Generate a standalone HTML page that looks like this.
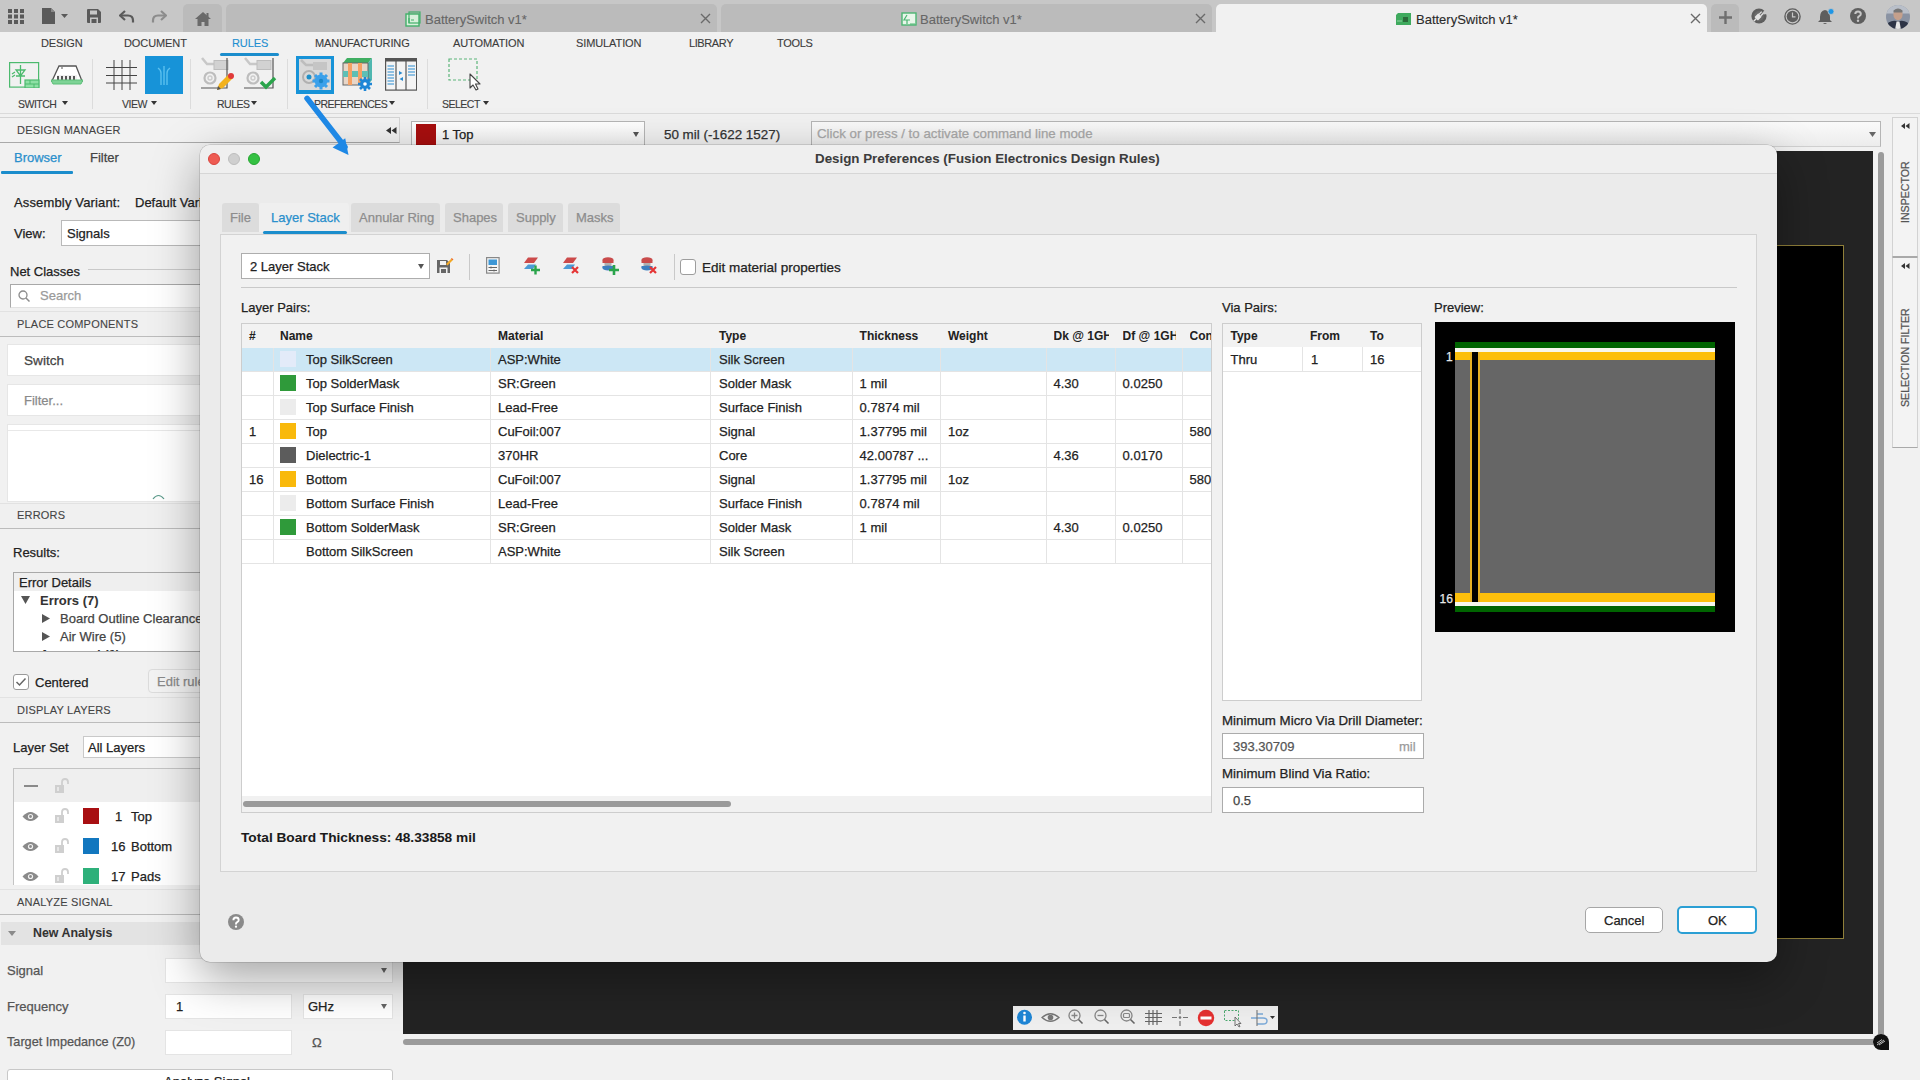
<!DOCTYPE html>
<html><head><meta charset="utf-8">
<style>
*{box-sizing:border-box;margin:0;padding:0}
html,body{width:1920px;height:1080px;overflow:hidden}
body{position:relative;background:#f1f1f1;font-family:"Liberation Sans",sans-serif;color:#222;font-size:13px}
.a{position:absolute}
.t{position:absolute;white-space:nowrap;line-height:1;-webkit-text-stroke:0.25px currentColor}
.t[style*="bold"]{-webkit-text-stroke:0.05px currentColor}
/* title bar */
#tb{left:0;top:0;width:1920px;height:32px;background:#c7c7c7}
.tab{top:4px;height:28px;background:#bbbbbb;border-radius:5px 5px 0 0}
.tabtxt{font-size:13px;color:#666;-webkit-text-stroke:0.1px currentColor}
/* ribbon */
#rb{left:0;top:32px;width:1920px;height:82px;background:#f1f1f1;border-bottom:1px solid #dadada}
.menu{top:6px;font-size:11px;color:#3c3c3c;letter-spacing:-0.1px;-webkit-text-stroke:0.12px currentColor}
.rlab{top:67px;font-size:10.5px;color:#3c3c3c;letter-spacing:-0.5px;-webkit-text-stroke:0.12px currentColor}
.sep{width:1px;background:#dcdcdc}
/* left panel */
.hdr{left:0;width:200px;height:26px;background:#f0f0f0;border-top:1px solid #e2e2e2;border-bottom:1px solid #bcbcbc}
.hdrt{font-size:11px;color:#444;letter-spacing:0.2px;-webkit-text-stroke:0.1px currentColor}
.lbl{font-size:13px;color:#222}
.box{background:#fff;border:1px solid #dcdcdc}
</style></head><body>

<!-- TITLE BAR -->
<div id="tb" class="a">
 <svg class="a" style="left:8px;top:9px" width="16" height="15" viewBox="0 0 16 15"><g fill="#5a5a5a"><rect x="0" y="0" width="4" height="4"/><rect x="6" y="0" width="4" height="4"/><rect x="12" y="0" width="4" height="4"/><rect x="0" y="5.5" width="4" height="4"/><rect x="6" y="5.5" width="4" height="4"/><rect x="12" y="5.5" width="4" height="4"/><rect x="0" y="11" width="4" height="4"/><rect x="6" y="11" width="4" height="4"/><rect x="12" y="11" width="4" height="4"/></g></svg>
 <svg class="a" style="left:42px;top:8px" width="28" height="16" viewBox="0 0 28 16"><path d="M0 0H9L13 4V16H0Z" fill="#5a5a5a"/><path d="M9 0V4H13" fill="#888"/><path d="M19 6H26L22.5 10Z" fill="#5a5a5a"/></svg>
 <svg class="a" style="left:87px;top:9px" width="14" height="14" viewBox="0 0 14 14"><path d="M1 0H11L14 3V13Q14 14 13 14H1Q0 14 0 13V1Q0 0 1 0Z" fill="#5a5a5a"/><rect x="3" y="1.5" width="7" height="4" fill="#c7c7c7"/><rect x="3" y="8.5" width="8" height="5.5" fill="#c7c7c7"/><rect x="4.5" y="10" width="5" height="4" fill="#5a5a5a"/></svg>
 <svg class="a" style="left:119px;top:10px" width="16" height="13" viewBox="0 0 16 13"><path d="M6 1L1 5.5L6 10" fill="none" stroke="#5a5a5a" stroke-width="2.2" stroke-linejoin="round"/><path d="M2 5.5H9Q14 5.5 14 10.5V12.5" fill="none" stroke="#5a5a5a" stroke-width="2.2"/></svg>
 <svg class="a" style="left:151px;top:10px" width="16" height="13" viewBox="0 0 16 13"><path d="M10 1L15 5.5L10 10" fill="none" stroke="#8c8c8c" stroke-width="2.2" stroke-linejoin="round"/><path d="M14 5.5H7Q2 5.5 2 10.5V12.5" fill="none" stroke="#8c8c8c" stroke-width="2.2"/></svg>
 <div class="a tab" style="left:183px;width:39px"></div>
 <svg class="a" style="left:195px;top:12px" width="16" height="14" viewBox="0 0 16 14"><path d="M8 0L16 7H13.5V14H9.5V10H6.5V14H2.5V7H0Z" fill="#6a6a6a"/><rect x="11.5" y="1" width="2" height="4" fill="#6a6a6a"/></svg>
 <div class="a tab" style="left:226px;width:491px"></div>
 <div class="a tab" style="left:721px;width:491px"></div>
 <div class="a tab" style="left:1216px;width:491px;background:#f1f1f1"></div>
 <div class="a tab" style="left:1711px;width:28px"></div>
 <!-- tab icons -->
 <svg class="a" style="left:405px;top:11px" width="16" height="16" viewBox="0 0 16 16"><rect x="1" y="3" width="13" height="12" fill="#d9f0dc" stroke="#42b06a" stroke-width="1.4"/><rect x="4" y="1" width="11" height="11" fill="none" stroke="#42b06a" stroke-width="1.2"/><path d="M4 7V12M6 9H9" stroke="#42b06a" stroke-width="1.2"/></svg>
 <div class="t tabtxt" style="left:425px;top:13px">BatterySwitch v1*</div>
 <svg class="a" style="left:700px;top:13px" width="11" height="11" viewBox="0 0 11 11"><path d="M1 1L10 10M10 1L1 10" stroke="#6a6a6a" stroke-width="1.4"/></svg>
 <svg class="a" style="left:901px;top:12px" width="16" height="15" viewBox="0 0 16 15"><rect x="1" y="1" width="14" height="12" fill="#e8f6ea" stroke="#4cb572" stroke-width="1.4"/><path d="M6 3L3 8H9M6 8V12M9 12H14" stroke="#4cb572" stroke-width="1.2" fill="none"/></svg>
 <div class="t tabtxt" style="left:920px;top:13px">BatterySwitch v1*</div>
 <svg class="a" style="left:1195px;top:13px" width="11" height="11" viewBox="0 0 11 11"><path d="M1 1L10 10M10 1L1 10" stroke="#6a6a6a" stroke-width="1.4"/></svg>
 <svg class="a" style="left:1396px;top:13px" width="15" height="12" viewBox="0 0 15 12"><path d="M2 0H15V12H0V2Z" fill="#3faa5e"/><rect x="7" y="4" width="5" height="5" fill="#2a6a3a"/><path d="M1 8H6" stroke="#8fd1a0" stroke-width="1"/></svg>
 <div class="t tabtxt" style="left:1416px;top:13px;color:#2a2a2a">BatterySwitch v1*</div>
 <svg class="a" style="left:1690px;top:13px" width="11" height="11" viewBox="0 0 11 11"><path d="M1 1L10 10M10 1L1 10" stroke="#6a6a6a" stroke-width="1.4"/></svg>
 <svg class="a" style="left:1719px;top:11px" width="13" height="13" viewBox="0 0 13 13"><path d="M6.5 0V13M0 6.5H13" stroke="#707070" stroke-width="2.4"/></svg>
 <svg class="a" style="left:1751px;top:8px" width="16" height="16" viewBox="0 0 16 16"><circle cx="8" cy="8" r="7.6" fill="#5e5e5e"/><path d="M9 7L16 0L16 6Z" fill="#c7c7c7"/><circle cx="8" cy="8" r="5" fill="#6a6a6a"/><g transform="rotate(45 8 8)"><rect x="5.6" y="6.5" width="4.8" height="5.5" rx="0.8" fill="#e2e2e2"/><rect x="6.2" y="3" width="1.3" height="3.5" fill="#e2e2e2"/><rect x="8.5" y="3" width="1.3" height="3.5" fill="#e2e2e2"/><rect x="7.3" y="12" width="1.4" height="3.5" fill="#e2e2e2"/></g></svg>
 <svg class="a" style="left:1784px;top:8px" width="17" height="17" viewBox="0 0 17 17"><circle cx="8.5" cy="8.5" r="7.6" fill="none" stroke="#5e5e5e" stroke-width="1.4"/><circle cx="8.5" cy="8.5" r="5.8" fill="#5e5e5e"/><path d="M8.5 4.5V8.8H11.5" fill="none" stroke="#c7c7c7" stroke-width="1.2"/></svg>
 <svg class="a" style="left:1817px;top:8px" width="18" height="17" viewBox="0 0 18 17"><path d="M8 2Q3 3 3 9V12L1 14H15L13 12V9Q13 3 8 2Z" fill="#5e5e5e"/><path d="M6 15Q8 17 10 15Z" fill="#5e5e5e"/><circle cx="14" cy="3.5" r="3" fill="#1e96e6" stroke="#c7c7c7" stroke-width="0.8"/></svg>
 <svg class="a" style="left:1850px;top:8px" width="16" height="16" viewBox="0 0 16 16"><circle cx="8" cy="8" r="8" fill="#5e5e5e"/><path d="M5.3 6Q5.3 3.4 8 3.4Q10.8 3.4 10.8 6Q10.8 7.5 9.2 8.2Q8 8.8 8 10V10.5" fill="none" stroke="#c7c7c7" stroke-width="2"/><circle cx="8" cy="12.8" r="1.2" fill="#c7c7c7"/></svg>
 <div class="a" style="left:1885.5px;top:4.5px;width:24px;height:24px;border-radius:12px;overflow:hidden"><svg width="24" height="24" viewBox="0.5 0.5 24 24" style="display:block"><rect width="25" height="25" fill="#8a93a3"/><rect y="0" width="25" height="9" fill="#b9bfc9"/><ellipse cx="12.5" cy="10" rx="4.6" ry="5.8" fill="#c4a08c"/><path d="M8 6Q12.5 2 17 6V8H8Z" fill="#777"/><path d="M0 25L3 18Q8 15 12.5 17Q17 15 22 18L25 25Z" fill="#2d3446"/><path d="M9.5 25L11 17H14L15.5 25Z" fill="#e6e6e6"/></svg></div>
</div>

<!-- RIBBON -->
<div id="rb" class="a">
 <div class="t menu" style="left:41px">DESIGN</div>
 <div class="t menu" style="left:124px">DOCUMENT</div>
 <div class="t menu" style="left:232px;color:#1f8fd0">RULES</div>
 <div class="a" style="left:220px;top:21px;width:59px;height:3px;background:#1b8dcc;border-radius:1.5px"></div>
 <div class="t menu" style="left:315px">MANUFACTURING</div>
 <div class="t menu" style="left:453px">AUTOMATION</div>
 <div class="t menu" style="left:576px">SIMULATION</div>
 <div class="t menu" style="left:689px;letter-spacing:-0.4px">LIBRARY</div>
 <div class="t menu" style="left:777px;letter-spacing:-0.3px">TOOLS</div>
 <!-- switch icons -->
 <svg class="a" style="left:9px;top:30px" width="31" height="26" viewBox="0 0 31 26"><rect x="0.6" y="0.6" width="29" height="24.5" fill="none" stroke="#4cba6e" stroke-width="1.2"/><path d="M11.5 3V22M7 8H16L11.5 14ZM7 14H16M3 12L6 10M3 15L6 13" fill="none" stroke="#4cba6e" stroke-width="1.3"/><rect x="16" y="18" width="14" height="8" fill="#8ee0a5" stroke="#4cba6e" stroke-width="1.2"/><path d="M16 22H30M21 18V22M25 22V26" stroke="#4cba6e" stroke-width="1"/></svg>
 <svg class="a" style="left:51px;top:33px" width="32" height="20" viewBox="0 0 32 20"><path d="M1 16L8 1H25L31 16Z" fill="#fff" stroke="#555" stroke-width="1.3"/><rect x="6" y="10" width="20" height="5" fill="#f0f0f0"/><path d="M7 11V16M11 11V16M15 11V16M19 11V16M23 11V16" stroke="#555" stroke-width="2"/><path d="M0 15H32L30 19H2Z" fill="#7ed396" stroke="#5cbf78" stroke-width="1"/><path d="M10 3H12" stroke="#555"/></svg>
 <div class="a sep" style="left:92px;top:27px;height:50px"></div>
 <svg class="a" style="left:106px;top:28px" width="31" height="30" viewBox="0 0 31 30"><path d="M8 0V30M16 0V30M24 0V30M0 7.5H31M0 15.5H31M0 23H31" stroke="#444" stroke-width="1"/></svg>
 <div class="a" style="left:145px;top:24px;width:38px;height:38px;background:#1793d8"></div>
 <svg class="a" style="left:156px;top:33px" width="16" height="20" viewBox="0 0 16 20"><path d="M8 20V5M5 20V8Q5 5 2 3M11 20V8Q11 5 14 3M8 5L8 1" fill="none" stroke="#5bc0ef" stroke-width="1.4"/></svg>
 <div class="a sep" style="left:190px;top:27px;height:50px"></div>
 <!-- rules icons -->
 <svg class="a" style="left:201px;top:25px" width="34" height="35" viewBox="0 0 34 35"><path d="M1 1L6 7H13" fill="none" stroke="#c8c8c8" stroke-width="2.5"/><rect x="13" y="3.5" width="14" height="9" fill="#d2d2d2" stroke="#bdbdbd"/><path d="M26 1V31H0" fill="none" stroke="#555" stroke-width="1.2"/><circle cx="9" cy="21" r="5.5" fill="none" stroke="#bdbdbd" stroke-width="2.2"/><circle cx="9" cy="21" r="2" fill="none" stroke="#ccc" stroke-width="1.4"/><path d="M16 33L18 27L28 17L32 21L22 31Z" fill="#f3b21c"/><path d="M16 33L17 29L20 32Z" fill="#555"/><circle cx="30" cy="19" r="3" fill="#e03a3a"/></svg>
 <svg class="a" style="left:244px;top:25px" width="34" height="35" viewBox="0 0 34 35"><path d="M1 1L6 7H13" fill="none" stroke="#c8c8c8" stroke-width="2.5"/><rect x="13" y="3.5" width="14" height="9" fill="#d2d2d2" stroke="#bdbdbd"/><path d="M29 1V31H0" fill="none" stroke="#555" stroke-width="1.2"/><circle cx="9" cy="21" r="5.5" fill="none" stroke="#bdbdbd" stroke-width="2.2"/><circle cx="9" cy="21" r="2" fill="none" stroke="#ccc" stroke-width="1.4"/><path d="M17 25L22 30L31 21" fill="none" stroke="#2aa44b" stroke-width="3.5"/></svg>
 <div class="a sep" style="left:287px;top:27px;height:50px"></div>
 <!-- preferences icons -->
 <div class="a" style="left:296px;top:24px;width:38px;height:38px;background:#1793d8"></div>
 <div class="a" style="left:299px;top:27px;width:32px;height:31px;background:#d9d9d9"></div>
 <svg class="a" style="left:299px;top:27px" width="32" height="31" viewBox="0 0 32 31"><path d="M2 1L7 6H14" fill="none" stroke="#bdbdbd" stroke-width="2.5"/><rect x="14" y="3" width="14" height="8" fill="#c5c5c5"/><circle cx="10" cy="18" r="6" fill="none" stroke="#b0b0b0" stroke-width="2"/><circle cx="10" cy="18" r="2.5" fill="#1e8fc8"/><circle cx="22" cy="22" r="6.5" fill="#3aa0ea"/><path d="M22 13.5V30.5M13.5 22H30.5M16 16L28 28M28 16L16 28" stroke="#3aa0ea" stroke-width="3"/><circle cx="22" cy="22" r="2.2" fill="#1a86c8"/></svg>
 <svg class="a" style="left:342px;top:26px" width="34" height="33" viewBox="0 0 34 33"><path d="M1 5L5 0H30L26 5Z" fill="#3fae62"/><path d="M26 5L30 0V22L26 27Z" fill="#4fb7b0"/><rect x="1" y="5" width="25" height="22" fill="#e8d6c8" stroke="#666" stroke-width="1"/><rect x="1" y="13" width="25" height="6" fill="#5dbfb5"/><rect x="6" y="5" width="4" height="22" fill="#f5a163"/><rect x="16" y="5" width="4" height="22" fill="#f5a163"/><circle cx="23" cy="26" r="5" fill="#1e86d6"/><path d="M23 19V33M16 26H30M18 21L28 31M28 21L18 31" stroke="#1e86d6" stroke-width="2.6"/><circle cx="23" cy="26" r="1.8" fill="#fff"/></svg>
 <svg class="a" style="left:385px;top:26px" width="32" height="33" viewBox="0 0 32 33"><rect x="0.6" y="0.6" width="31" height="31.5" fill="#f4f4f4" stroke="#555" stroke-width="1.2"/><rect x="0" y="0" width="32" height="3.5" fill="#555"/><path d="M11 3V32M21 3V32" stroke="#555" stroke-width="1.2"/><path d="M2.5 8H9M2.5 11H9M2.5 14H9M2.5 17H9M2.5 20H9M2.5 23H9M2.5 26H9M23 8H30M23 11H30M23 14H30M23 17H30" stroke="#2b8bd0" stroke-width="1.2"/><path d="M14 13L17.5 15L14 17ZM18 19L14.5 21L18 23Z" fill="#2b8bd0"/></svg>
 <div class="a sep" style="left:427px;top:27px;height:50px"></div>
 <svg class="a" style="left:448px;top:26px" width="33" height="33" viewBox="0 0 33 33"><rect x="1" y="1" width="28" height="21" fill="none" stroke="#5cb57a" stroke-width="1.2" stroke-dasharray="3 2"/><path d="M22 16V30L25 27L28 32L30 31L27.5 26H32Z" fill="#fff" stroke="#444" stroke-width="1.1" stroke-linejoin="round"/></svg>
 <div class="t rlab" style="left:18px">SWITCH</div><svg class="a" style="left:62px;top:69px" width="6" height="4"><path d="M0 0H6L3 4Z" fill="#333"/></svg>
 <div class="t rlab" style="left:122px">VIEW</div><svg class="a" style="left:151px;top:69px" width="6" height="4"><path d="M0 0H6L3 4Z" fill="#333"/></svg>
 <div class="t rlab" style="left:217px">RULES</div><svg class="a" style="left:251px;top:69px" width="6" height="4"><path d="M0 0H6L3 4Z" fill="#333"/></svg>
 <div class="t rlab" style="left:314px">PREFERENCES</div><svg class="a" style="left:389px;top:69px" width="6" height="4"><path d="M0 0H6L3 4Z" fill="#333"/></svg>
 <div class="t rlab" style="left:442px">SELECT</div><svg class="a" style="left:483px;top:69px" width="6" height="4"><path d="M0 0H6L3 4Z" fill="#333"/></svg>
</div>

<!-- LEFT PANEL -->
<div class="a" style="left:0;top:117px;width:400px;height:26px;background:#f2f2f2;border:1px solid #d4d4d4;border-bottom-color:#a9a9a9;border-left:none"></div>
<div class="t hdrt" style="left:17px;top:125px">DESIGN MANAGER</div>
<svg class="a" style="left:386px;top:127px" width="11" height="7" viewBox="0 0 11 7"><path d="M0 3.5L5 0V7ZM5.5 3.5L10.5 0V7Z" fill="#333"/></svg>
<div class="t lbl" style="left:14px;top:151px;color:#2a8fcc">Browser</div>
<div class="a" style="left:1px;top:171px;width:72px;height:3px;background:#1b8dcc;border-radius:1px"></div>
<div class="t lbl" style="left:90px;top:151px;color:#444">Filter</div>
<div class="t lbl" style="left:14px;top:196px;letter-spacing:0.15px">Assembly Variant:</div>
<div class="t lbl" style="left:135px;top:196px">Default Variant</div>
<div class="t lbl" style="left:14px;top:227px">View:</div>
<div class="a box" style="left:61px;top:220px;width:332px;height:26px;border-color:#b9b9b9"></div>
<div class="t lbl" style="left:67px;top:227px">Signals</div>
<div class="t lbl" style="left:10px;top:265px">Net Classes</div>
<div class="a" style="left:88px;top:269px;width:304px;height:1px;background:#c9c9c9"></div>
<div class="a box" style="left:10px;top:284px;width:382px;height:24px;border-color:#e2e2e2;border-top-color:#a8a8a8;border-left-color:#a8a8a8"></div>
<svg class="a" style="left:18px;top:290px" width="12" height="12" viewBox="0 0 12 12"><circle cx="5" cy="5" r="4" fill="none" stroke="#8c8c8c" stroke-width="1.3"/><path d="M8 8L11.5 11.5" stroke="#8c8c8c" stroke-width="1.5"/></svg>
<div class="t lbl" style="left:40px;top:289px;color:#9a9a9a">Search</div>
<div class="a hdr" style="top:311px;width:400px"></div>
<div class="t hdrt" style="left:17px;top:319px">PLACE COMPONENTS</div>
<div class="a box" style="left:7px;top:344px;width:385px;height:32px;border-color:#e6e6e6"></div>
<div class="t lbl" style="left:24px;top:354px;color:#444;font-size:13.6px">Switch</div>
<div class="a box" style="left:7px;top:384px;width:385px;height:32px;border-color:#e6e6e6"></div>
<div class="t lbl" style="left:24px;top:394px;color:#8a8a8a">Filter...</div>
<div class="a box" style="left:7px;top:424px;width:385px;height:78px;border-color:#e6e6e6"></div>
<div class="a" style="left:8px;top:430px;width:384px;height:1px;background:#e8e8e8"></div>
<svg class="a" style="left:152px;top:494px" width="13" height="6" viewBox="0 0 13 6"><path d="M1 5Q6.5 -2 12 5" fill="none" stroke="#5a9a8a" stroke-width="1.2"/></svg>
<div class="a hdr" style="top:503px;width:400px"></div>
<div class="t hdrt" style="left:17px;top:510px">ERRORS</div>
<div class="t lbl" style="left:13px;top:546px">Results:</div>
<div class="a" style="left:13px;top:572px;width:380px;height:80px;background:#fff;border:1px solid #a9a9a9;overflow:hidden">
 <div class="a" style="left:0;top:0;width:380px;height:18px;background:#efefef"></div>
 <div class="t lbl" style="left:5px;top:3px">Error Details</div>
 <svg class="a" style="left:7px;top:23px" width="9" height="8"><path d="M0 0H9L4.5 8Z" fill="#555"/></svg>
 <div class="t lbl" style="left:26px;top:21px;font-weight:bold;color:#333">Errors (7)</div>
 <svg class="a" style="left:28px;top:41px" width="8" height="9"><path d="M0 0V9L8 4.5Z" fill="#555"/></svg>
 <div class="t lbl" style="left:46px;top:39px;color:#444">Board Outline Clearance (2)</div>
 <svg class="a" style="left:28px;top:59px" width="8" height="9"><path d="M0 0V9L8 4.5Z" fill="#555"/></svg>
 <div class="t lbl" style="left:46px;top:57px;color:#444">Air Wire (5)</div>
 <div class="t lbl" style="left:26px;top:75px;font-weight:bold;color:#333">Approved (0)</div>
</div>
<div class="a" style="left:13px;top:674px;width:16px;height:16px;background:#fff;border:1px solid #9a9a9a;border-radius:3px"></div>
<svg class="a" style="left:15px;top:677px" width="12" height="10" viewBox="0 0 12 10"><path d="M1.5 5L4.5 8L10.5 1.5" fill="none" stroke="#666" stroke-width="1.5"/></svg>
<div class="t lbl" style="left:35px;top:676px">Centered</div>
<div class="a" style="left:148px;top:669px;width:244px;height:24px;background:#f3f3f3;border:1px solid #dcdcdc;border-radius:4px"></div>
<div class="t lbl" style="left:157px;top:675px;color:#8a8a8a">Edit rules</div>
<div class="a hdr" style="top:697px;width:400px"></div>
<div class="t hdrt" style="left:17px;top:705px">DISPLAY LAYERS</div>
<div class="t lbl" style="left:13px;top:741px">Layer Set</div>
<div class="a box" style="left:83px;top:736px;width:309px;height:22px;border-color:#c9c9c9"></div>
<div class="t lbl" style="left:88px;top:741px">All Layers</div>
<div class="a" style="left:13px;top:768px;width:380px;height:117px;background:#fff;border:1px solid #c4c4c4;border-bottom:none;overflow:hidden">
 <div class="a" style="left:0;top:0;width:380px;height:33px;background:#efefef"></div>
 <div class="a" style="left:10px;top:16px;width:14px;height:2px;background:#8a8a8a"></div>
</div>
<svg class="a" style="left:55px;top:778px" width="14" height="15" viewBox="0 0 14 15"><rect x="0" y="7" width="9" height="8" fill="#cfcfcf"/><path d="M7 7V4Q7 1 10 1Q13 1 13 4V6" fill="none" stroke="#cfcfcf" stroke-width="1.8"/><path d="M3 9V13" stroke="#fff" stroke-width="1"/></svg><svg class="a" style="left:22px;top:811px" width="17" height="11" viewBox="0 0 17 11"><path d="M0.5 5.5Q8.5 -3.5 16.5 5.5Q8.5 14.5 0.5 5.5Z" fill="#8a8a8a"/><circle cx="8.5" cy="5.5" r="2.6" fill="#f2f2f2"/><circle cx="8.5" cy="5.5" r="1.4" fill="#8a8a8a"/></svg><svg class="a" style="left:55px;top:808px" width="14" height="15" viewBox="0 0 14 15"><rect x="0" y="7" width="9" height="8" fill="#cfcfcf"/><path d="M7 7V4Q7 1 10 1Q13 1 13 4V6" fill="none" stroke="#cfcfcf" stroke-width="1.8"/><path d="M3 9V13" stroke="#fff" stroke-width="1"/></svg><div class="a" style="left:83px;top:808px;width:16px;height:16px;background:#a80f12"></div><div class="t lbl" style="left:115px;top:810px">1</div><div class="t lbl" style="left:131px;top:810px">Top</div><svg class="a" style="left:22px;top:841px" width="17" height="11" viewBox="0 0 17 11"><path d="M0.5 5.5Q8.5 -3.5 16.5 5.5Q8.5 14.5 0.5 5.5Z" fill="#8a8a8a"/><circle cx="8.5" cy="5.5" r="2.6" fill="#f2f2f2"/><circle cx="8.5" cy="5.5" r="1.4" fill="#8a8a8a"/></svg><svg class="a" style="left:55px;top:838px" width="14" height="15" viewBox="0 0 14 15"><rect x="0" y="7" width="9" height="8" fill="#cfcfcf"/><path d="M7 7V4Q7 1 10 1Q13 1 13 4V6" fill="none" stroke="#cfcfcf" stroke-width="1.8"/><path d="M3 9V13" stroke="#fff" stroke-width="1"/></svg><div class="a" style="left:83px;top:838px;width:16px;height:16px;background:#1277bf"></div><div class="t lbl" style="left:111px;top:840px">16</div><div class="t lbl" style="left:131px;top:840px">Bottom</div><svg class="a" style="left:22px;top:871px" width="17" height="11" viewBox="0 0 17 11"><path d="M0.5 5.5Q8.5 -3.5 16.5 5.5Q8.5 14.5 0.5 5.5Z" fill="#8a8a8a"/><circle cx="8.5" cy="5.5" r="2.6" fill="#f2f2f2"/><circle cx="8.5" cy="5.5" r="1.4" fill="#8a8a8a"/></svg><svg class="a" style="left:55px;top:868px" width="14" height="15" viewBox="0 0 14 15"><rect x="0" y="7" width="9" height="8" fill="#cfcfcf"/><path d="M7 7V4Q7 1 10 1Q13 1 13 4V6" fill="none" stroke="#cfcfcf" stroke-width="1.8"/><path d="M3 9V13" stroke="#fff" stroke-width="1"/></svg><div class="a" style="left:83px;top:868px;width:16px;height:16px;background:#2eb07a"></div><div class="t lbl" style="left:111px;top:870px">17</div><div class="t lbl" style="left:131px;top:870px">Pads</div>
<div class="a hdr" style="top:889px;width:400px"></div>
<div class="t hdrt" style="left:17px;top:897px">ANALYZE SIGNAL</div>
<div class="a" style="left:1px;top:922px;width:392px;height:23px;background:#e3e3e3"></div>
<svg class="a" style="left:8px;top:931px" width="8" height="5"><path d="M0 0H8L4 5Z" fill="#8a8a8a"/></svg>
<div class="t lbl" style="left:33px;top:927px;font-weight:bold;font-size:12.4px;color:#333">New Analysis</div>
<div class="t lbl" style="left:7px;top:964px;color:#555">Signal</div>
<div class="a box" style="left:165px;top:958px;width:228px;height:25px;border-color:#e4e4e4"></div>
<svg class="a" style="left:381px;top:968px" width="6" height="5"><path d="M0 0H6L3 5Z" fill="#666"/></svg>
<div class="t lbl" style="left:7px;top:1000px;color:#555">Frequency</div>
<div class="a box" style="left:165px;top:994px;width:127px;height:25px;border-color:#e4e4e4"></div>
<div class="t lbl" style="left:176px;top:1000px">1</div>
<div class="a box" style="left:303px;top:994px;width:90px;height:25px;border-color:#e4e4e4"></div>
<div class="t lbl" style="left:308px;top:1000px">GHz</div>
<svg class="a" style="left:381px;top:1004px" width="6" height="5"><path d="M0 0H6L3 5Z" fill="#666"/></svg>
<div class="t lbl" style="left:7px;top:1036px;color:#555;font-size:12.7px">Target Impedance (Z0)</div>
<div class="a box" style="left:165px;top:1030px;width:127px;height:25px;border-color:#e4e4e4"></div>
<div class="t lbl" style="left:312px;top:1036px;color:#555">&#937;</div>
<div class="a box" style="left:7px;top:1069px;width:386px;height:30px;border-color:#c8c8c8;border-radius:3px"></div>
<div class="t lbl" style="left:164px;top:1075px">Analyze Signal</div>

<!-- CANVAS AREA -->
<div class="a" style="left:411px;top:121px;width:234px;height:26px;background:linear-gradient(#fff,#f1f1f1);border:1px solid #b5b5b5"></div>
<div class="a" style="left:416px;top:124px;width:20px;height:21px;background:#a80e0e"></div>
<div class="t lbl" style="left:442px;top:128px">1 Top</div>
<svg class="a" style="left:633px;top:132px" width="6" height="5"><path d="M0 0H6L3 5Z" fill="#555"/></svg>
<div class="t lbl" style="left:664px;top:128px;font-size:13.4px;color:#333">50 mil (-1622 1527)</div>
<div class="a" style="left:811px;top:121px;width:1070px;height:26px;background:linear-gradient(#fafafa,#ececec);border:1px solid #b5b5b5;border-bottom-color:#d0d0d0"></div>
<div class="t lbl" style="left:817px;top:127px;color:#a9a9a9;font-size:13.3px">Click or press / to activate command line mode</div>
<svg class="a" style="left:1869px;top:132px" width="7" height="5"><path d="M0 0H7L3.5 5Z" fill="#666"/></svg>
<div class="a" style="left:403px;top:151px;width:1470px;height:883px;background:#232323"></div>
<div class="a" style="left:500px;top:245px;width:1344px;height:694px;background:#000;border:1px solid #8f7f3a"></div>
<div class="a" style="left:1878px;top:152px;width:6px;height:882px;background:#9b9b9b;border-radius:3px 3px 0 0"></div>
<div class="a" style="left:403px;top:1039px;width:1470px;height:6px;background:#9b9b9b;border-radius:3px 0 0 3px"></div>
<div class="a" style="left:1873px;top:1034px;width:16px;height:16px;background:#111;border-radius:8px 8px 0 8px"></div>
<svg class="a" style="left:1876px;top:1038px" width="10" height="8" viewBox="0 0 10 8"><path d="M1 7L8 2M1 5L6 1.5M3 7L9 3" stroke="#bbb" stroke-width="1"/></svg>
<!-- bottom toolbar -->
<div class="a" style="left:1013px;top:1006px;width:265px;height:24px;background:#efefef"></div>
<svg class="a" style="left:1013px;top:1006px" width="265" height="24" viewBox="0 0 265 24">
 <circle cx="11.5" cy="11.3" r="7.5" fill="#1e86d6"/><rect x="10.3" y="9.5" width="2.4" height="6" fill="#fff"/><circle cx="11.5" cy="7" r="1.3" fill="#fff"/>
 <path d="M29 11.5Q37.5 4 46 11.5Q37.5 19 29 11.5Z" fill="none" stroke="#777" stroke-width="1.3"/><circle cx="37.5" cy="11.5" r="2.8" fill="#777"/>
 <circle cx="61.5" cy="9.5" r="5.5" fill="none" stroke="#888" stroke-width="1.3"/><path d="M65.5 13.5L69.5 17.5" stroke="#666" stroke-width="1.6"/><path d="M61.5 6.5V12.5M58.5 9.5H64.5" stroke="#888" stroke-width="1.3"/>
 <circle cx="87.5" cy="9.5" r="5.5" fill="none" stroke="#888" stroke-width="1.3"/><path d="M91.5 13.5L95.5 17.5" stroke="#666" stroke-width="1.6"/><path d="M84.5 9.5H90.5" stroke="#888" stroke-width="1.3"/>
 <circle cx="113.5" cy="9.5" r="5.5" fill="none" stroke="#888" stroke-width="1.3"/><path d="M117.5 13.5L121.5 17.5" stroke="#666" stroke-width="1.6"/><rect x="110.5" y="7.5" width="6" height="4" rx="1" fill="none" stroke="#888" stroke-width="1.2"/>
 <path d="M136 4V19M140 4V19M144 4V19M132 7.5H149M132 11.5H149M132 15.5H149" stroke="#666" stroke-width="1.2"/>
 <path d="M167 3V8M167 15V20M159 11.5H164M170 11.5H175" stroke="#777" stroke-width="1.2"/><circle cx="167" cy="11.5" r="1.3" fill="#777"/>
 <circle cx="193" cy="12" r="8.2" fill="#e53030"/><rect x="187.5" y="10.5" width="11" height="3" fill="#fff"/>
 <rect x="211.5" y="4.5" width="14" height="10" fill="none" stroke="#4daa70" stroke-width="1" stroke-dasharray="2 1.5"/><path d="M222 11V20L224 18L226 21L227 20.5L225.5 17.5H228Z" fill="#eee" stroke="#555" stroke-width="0.8"/>
 <path d="M238 12H250Q254 12 254 15Q254 18 250 18H244M244 8H250" fill="none" stroke="#7aa9d8" stroke-width="1.4"/><path d="M244 4V20" stroke="#777" stroke-width="1.1"/><path d="M257 10H262L259.5 13Z" fill="#333"/>
</svg>
<!-- right panel -->
<div class="a" style="left:1892px;top:117px;width:26px;height:140px;background:#f3f3f3;border:1px solid #d2d2d2;border-bottom-color:#a9a9a9"></div>
<svg class="a" style="left:1901px;top:123px" width="9" height="6" viewBox="0 0 9 6"><path d="M0 3L4 0V6ZM4.5 3L8.5 0V6Z" fill="#333"/></svg>
<div class="t" style="left:1900px;top:222.5px;font-size:10.6px;color:#555;transform:rotate(-90deg);transform-origin:0 0">INSPECTOR</div>
<div class="a" style="left:1892px;top:257px;width:26px;height:191px;background:#f3f3f3;border:1px solid #d2d2d2;border-top-color:#a9a9a9;border-bottom-color:#a9a9a9"></div>
<svg class="a" style="left:1901px;top:263px" width="9" height="6" viewBox="0 0 9 6"><path d="M0 3L4 0V6ZM4.5 3L8.5 0V6Z" fill="#333"/></svg>
<div class="t" style="left:1900px;top:406.7px;font-size:10.6px;color:#555;transform:rotate(-90deg);transform-origin:0 0">SELECTION FILTER</div>

<!-- DIALOG -->
<div class="a" id="dlg" style="left:200px;top:145px;width:1577px;height:817px;background:#ebebeb;border-radius:10px;box-shadow:0 16px 48px rgba(0,0,0,0.36),0 0 0 0.5px rgba(0,0,0,0.22);overflow:hidden">
 <div class="a" style="left:0;top:0;width:1577px;height:29px;background:#efefef;border-bottom:1px solid #d6d6d6"></div>
</div>
<div class="a" style="left:208px;top:152.5px;width:12px;height:12px;border-radius:6px;background:#ee5b52;border:0.5px solid #d9443d"></div>
<div class="a" style="left:227.5px;top:152.5px;width:12px;height:12px;border-radius:6px;background:#cfcfcf;border:0.5px solid #bdbdbd"></div>
<div class="a" style="left:248px;top:152.5px;width:12px;height:12px;border-radius:6px;background:#34c142;border:0.5px solid #26a632"></div>
<div class="t" style="left:815px;top:152px;font-size:13.35px;font-weight:bold;color:#3c3c3c">Design Preferences (Fusion Electronics Design Rules)</div>
<!-- tabs -->
<div class="a" style="left:222px;top:203px;width:37px;height:29px;background:#dcdcdc;border-radius:3px 3px 0 0"></div>
<div class="t lbl" style="left:230px;top:211px;color:#8d8d8d">File</div>
<div class="a" style="left:259px;top:203px;width:90px;height:29px;background:#efefef;border-radius:3px 3px 0 0"></div>
<div class="t lbl" style="left:271px;top:211px;color:#2a8fcc">Layer Stack</div>
<div class="a" style="left:263px;top:231px;width:84px;height:3px;background:#1b8dcc;border-radius:1.5px"></div>
<div class="a" style="left:351px;top:203px;width:89px;height:29px;background:#dcdcdc;border-radius:3px 3px 0 0"></div>
<div class="t lbl" style="left:359px;top:211px;color:#8d8d8d">Annular Ring</div>
<div class="a" style="left:445px;top:203px;width:58px;height:29px;background:#dcdcdc;border-radius:3px 3px 0 0"></div>
<div class="t lbl" style="left:453px;top:211px;color:#8d8d8d">Shapes</div>
<div class="a" style="left:508px;top:203px;width:55px;height:29px;background:#dcdcdc;border-radius:3px 3px 0 0"></div>
<div class="t lbl" style="left:516px;top:211px;color:#8d8d8d">Supply</div>
<div class="a" style="left:568px;top:203px;width:52px;height:29px;background:#dcdcdc;border-radius:3px 3px 0 0"></div>
<div class="t lbl" style="left:576px;top:211px;color:#8d8d8d">Masks</div>
<!-- panel -->
<div class="a" style="left:220px;top:234px;width:1537px;height:638px;background:#f1f1f1;border:1px solid #d3d3d3"></div>
<div class="a box" style="left:241px;top:253px;width:189px;height:26px;border-color:#adadad"></div>
<div class="t lbl" style="left:250px;top:260px">2 Layer Stack</div>
<svg class="a" style="left:418px;top:264px" width="6" height="5"><path d="M0 0H6L3 5Z" fill="#555"/></svg>
<svg class="a" style="left:436px;top:257px" width="18" height="17" viewBox="0 0 18 17"><path d="M1 3H11L14 6V16H1Z" fill="#666"/><rect x="4" y="4" width="6" height="4" fill="#f1f1f1"/><rect x="3.5" y="10.5" width="8" height="5.5" fill="#f1f1f1"/><rect x="5" y="12" width="5" height="4" fill="#666"/><path d="M10 7L16 1L17.5 2.5L11.5 8.5Z" fill="#f3a824"/><path d="M15.5 1.5L17 3" stroke="#e55" stroke-width="1"/></svg>
<div class="a" style="left:469px;top:254px;width:1px;height:26px;background:#c9c9c9"></div>
<svg class="a" style="left:486px;top:257px" width="14" height="17" viewBox="0 0 14 17"><rect x="0.6" y="0.6" width="12.5" height="15.5" fill="#f6f6f6" stroke="#888" stroke-width="1.2"/><rect x="2.5" y="2.5" width="8.5" height="5.5" fill="#3d97d6"/><path d="M2.5 10.5H11M2.5 13.5H11" stroke="#666" stroke-width="1"/><path d="M5 9.5V11.5M8 12.5V14.5" stroke="#666" stroke-width="1"/></svg>
<svg class="a" style="left:523px;top:257px" width="18" height="18" viewBox="0 0 18 18"><path d="M5 0.5H15L11 6H1Z" fill="#cc4a4a"/><path d="M5 7.5H13L10 12H1Z" fill="#4b9bd6"/><path d="M12.5 8.5V17.5M8 13H17" stroke="#2aa44b" stroke-width="2.4"/></svg>
<svg class="a" style="left:562px;top:257px" width="18" height="18" viewBox="0 0 18 18"><path d="M5 0.5H15L11 6H1Z" fill="#cc4a4a"/><path d="M5 7.5H13L10 12H1Z" fill="#4b9bd6"/><path d="M10 10L16 16M16 10L10 16" stroke="#e53535" stroke-width="2.2"/></svg>
<svg class="a" style="left:601px;top:257px" width="18" height="18" viewBox="0 0 18 18"><ellipse cx="7" cy="2.8" rx="5.5" ry="2.5" fill="#c94b4b"/><rect x="1.5" y="3" width="11" height="3" fill="#c94b4b"/><rect x="3.5" y="6" width="7" height="3" fill="#b0b0b0"/><ellipse cx="7" cy="11" rx="5.5" ry="2.5" fill="#3d7fbf"/><rect x="1.5" y="9" width="11" height="2" fill="#3d7fbf"/><path d="M13 8V18M8 13H18" stroke="#2aa44b" stroke-width="2.6"/></svg>
<svg class="a" style="left:640px;top:257px" width="18" height="18" viewBox="0 0 18 18"><ellipse cx="7" cy="2.8" rx="5.5" ry="2.5" fill="#c94b4b"/><rect x="1.5" y="3" width="11" height="3" fill="#c94b4b"/><rect x="3.5" y="6" width="7" height="3" fill="#b0b0b0"/><ellipse cx="7" cy="11" rx="5.5" ry="2.5" fill="#3d7fbf"/><rect x="1.5" y="9" width="11" height="2" fill="#3d7fbf"/><path d="M10 10L16 16M16 10L10 16" stroke="#e53535" stroke-width="2.2"/></svg>
<div class="a" style="left:674px;top:254px;width:1px;height:26px;background:#c9c9c9"></div>
<div class="a" style="left:680px;top:259px;width:16px;height:16px;background:#fff;border:1px solid #9d9d9d;border-radius:3px"></div>
<div class="t lbl" style="left:702px;top:261px;font-size:13.5px">Edit material properties</div>
<div class="a" style="left:241px;top:287px;width:1496px;height:1px;background:#c9c9c9"></div>
<div class="t lbl" style="left:241px;top:301px">Layer Pairs:</div>
<div class="t lbl" style="left:1222px;top:301px">Via Pairs:</div>
<div class="t lbl" style="left:1434px;top:301px">Preview:</div>

<div class="a" style="left:241px;top:323px;width:971px;height:490px;background:#fff;border:1px solid #cdcdcd;overflow:hidden">
 <div class="a" style="left:0;top:0;width:970px;height:24px;background:#f2f2f2"></div>
 <div class="a" style="left:0;top:24px;width:970px;height:24px;background:#cce7f5"></div>
 <div class="a" style="left:0;top:47px;width:970px;height:1px;background:#e4e4e4"></div>
 <div class="a" style="left:0;top:71px;width:970px;height:1px;background:#e4e4e4"></div>
 <div class="a" style="left:0;top:95px;width:970px;height:1px;background:#e4e4e4"></div>
 <div class="a" style="left:0;top:119px;width:970px;height:1px;background:#e4e4e4"></div>
 <div class="a" style="left:0;top:143px;width:970px;height:1px;background:#e4e4e4"></div>
 <div class="a" style="left:0;top:167px;width:970px;height:1px;background:#e4e4e4"></div>
 <div class="a" style="left:0;top:191px;width:970px;height:1px;background:#e4e4e4"></div>
 <div class="a" style="left:0;top:215px;width:970px;height:1px;background:#e4e4e4"></div>
 <div class="a" style="left:0;top:239px;width:970px;height:1px;background:#e4e4e4"></div>
 <div class="a" style="left:30.5px;top:24px;width:1px;height:216px;background:#e4e4e4"></div>
 <div class="a" style="left:248.3px;top:24px;width:1px;height:216px;background:#e4e4e4"></div>
 <div class="a" style="left:468.2px;top:24px;width:1px;height:216px;background:#e4e4e4"></div>
 <div class="a" style="left:609.5px;top:24px;width:1px;height:216px;background:#e4e4e4"></div>
 <div class="a" style="left:698.0px;top:24px;width:1px;height:216px;background:#e4e4e4"></div>
 <div class="a" style="left:803.5px;top:24px;width:1px;height:216px;background:#e4e4e4"></div>
 <div class="a" style="left:872.6px;top:24px;width:1px;height:216px;background:#e4e4e4"></div>
 <div class="a" style="left:939.5px;top:24px;width:1px;height:216px;background:#e4e4e4"></div>
 <div class="t" style="left:7.0px;top:6px;font-size:12px;font-weight:bold;color:#222">#</div>
 <div class="t" style="left:38.0px;top:6px;font-size:12px;font-weight:bold;color:#222">Name</div>
 <div class="t" style="left:256.0px;top:6px;font-size:12px;font-weight:bold;color:#222">Material</div>
 <div class="t" style="left:477.0px;top:6px;font-size:12px;font-weight:bold;color:#222">Type</div>
 <div class="t" style="left:617.6px;top:6px;font-size:12px;font-weight:bold;color:#222">Thickness</div>
 <div class="t" style="left:706.0px;top:6px;font-size:12px;font-weight:bold;color:#222">Weight</div>
 <div class="t" style="left:811.5px;top:6px;width:55px;overflow:hidden;font-size:12px;font-weight:bold;color:#222">Dk @ 1GHz</div>
 <div class="t" style="left:880.6px;top:6px;width:53px;overflow:hidden;font-size:12px;font-weight:bold;color:#222">Df @ 1GHz</div>
 <div class="t" style="left:947.5px;top:6px;width:22px;overflow:hidden;font-size:12px;font-weight:bold;color:#222">Conductivity</div>
 <div class="a" style="left:38px;top:27px;width:16px;height:16px;background:#e3ebf9"></div>
 <div class="t lbl" style="left:64.0px;top:29px">Top SilkScreen</div>
 <div class="t lbl" style="left:256.0px;top:29px">ASP:White</div>
 <div class="t lbl" style="left:477.0px;top:29px">Silk Screen</div>
 <div class="a" style="left:38px;top:51px;width:16px;height:16px;background:#2f9a3a"></div>
 <div class="t lbl" style="left:64.0px;top:53px">Top SolderMask</div>
 <div class="t lbl" style="left:256.0px;top:53px">SR:Green</div>
 <div class="t lbl" style="left:477.0px;top:53px">Solder Mask</div>
 <div class="t lbl" style="left:617.6px;top:53px">1 mil</div>
 <div class="t lbl" style="left:811.5px;top:53px">4.30</div>
 <div class="t lbl" style="left:880.6px;top:53px">0.0250</div>
 <div class="a" style="left:38px;top:75px;width:16px;height:16px;background:#ececec"></div>
 <div class="t lbl" style="left:64.0px;top:77px">Top Surface Finish</div>
 <div class="t lbl" style="left:256.0px;top:77px">Lead-Free</div>
 <div class="t lbl" style="left:477.0px;top:77px">Surface Finish</div>
 <div class="t lbl" style="left:617.6px;top:77px">0.7874 mil</div>
 <div class="t lbl" style="left:7px;top:101px">1</div>
 <div class="a" style="left:38px;top:99px;width:16px;height:16px;background:#f9b90b"></div>
 <div class="t lbl" style="left:64.0px;top:101px">Top</div>
 <div class="t lbl" style="left:256.0px;top:101px">CuFoil:007</div>
 <div class="t lbl" style="left:477.0px;top:101px">Signal</div>
 <div class="t lbl" style="left:617.6px;top:101px">1.37795 mil</div>
 <div class="t lbl" style="left:706.0px;top:101px">1oz</div>
 <div class="t lbl" style="left:947.5px;top:101px">5800000</div>
 <div class="a" style="left:38px;top:123px;width:16px;height:16px;background:#5c5c5c"></div>
 <div class="t lbl" style="left:64.0px;top:125px">Dielectric-1</div>
 <div class="t lbl" style="left:256.0px;top:125px">370HR</div>
 <div class="t lbl" style="left:477.0px;top:125px">Core</div>
 <div class="t lbl" style="left:617.6px;top:125px">42.00787 ...</div>
 <div class="t lbl" style="left:811.5px;top:125px">4.36</div>
 <div class="t lbl" style="left:880.6px;top:125px">0.0170</div>
 <div class="t lbl" style="left:7px;top:149px">16</div>
 <div class="a" style="left:38px;top:147px;width:16px;height:16px;background:#f9b90b"></div>
 <div class="t lbl" style="left:64.0px;top:149px">Bottom</div>
 <div class="t lbl" style="left:256.0px;top:149px">CuFoil:007</div>
 <div class="t lbl" style="left:477.0px;top:149px">Signal</div>
 <div class="t lbl" style="left:617.6px;top:149px">1.37795 mil</div>
 <div class="t lbl" style="left:706.0px;top:149px">1oz</div>
 <div class="t lbl" style="left:947.5px;top:149px">5800000</div>
 <div class="a" style="left:38px;top:171px;width:16px;height:16px;background:#ececec"></div>
 <div class="t lbl" style="left:64.0px;top:173px">Bottom Surface Finish</div>
 <div class="t lbl" style="left:256.0px;top:173px">Lead-Free</div>
 <div class="t lbl" style="left:477.0px;top:173px">Surface Finish</div>
 <div class="t lbl" style="left:617.6px;top:173px">0.7874 mil</div>
 <div class="a" style="left:38px;top:195px;width:16px;height:16px;background:#2f9a3a"></div>
 <div class="t lbl" style="left:64.0px;top:197px">Bottom SolderMask</div>
 <div class="t lbl" style="left:256.0px;top:197px">SR:Green</div>
 <div class="t lbl" style="left:477.0px;top:197px">Solder Mask</div>
 <div class="t lbl" style="left:617.6px;top:197px">1 mil</div>
 <div class="t lbl" style="left:811.5px;top:197px">4.30</div>
 <div class="t lbl" style="left:880.6px;top:197px">0.0250</div>
 <div class="t lbl" style="left:64.0px;top:221px">Bottom SilkScreen</div>
 <div class="t lbl" style="left:256.0px;top:221px">ASP:White</div>
 <div class="t lbl" style="left:477.0px;top:221px">Silk Screen</div>
 <div class="a" style="left:0;top:472px;width:970px;height:17px;background:#f1f1f1"></div>
 <div class="a" style="left:1px;top:477px;width:488px;height:6px;background:#9a9a9a;border-radius:3px"></div>
</div>
<div class="a" style="left:1222px;top:323px;width:200px;height:378px;background:#fff;border:1px solid #cdcdcd;overflow:hidden">
 <div class="a" style="left:0;top:0;width:200px;height:23px;background:#f2f2f2"></div>
 <div class="a" style="left:0;top:47px;width:200px;height:1px;background:#e4e4e4"></div>
 <div class="a" style="left:79px;top:23px;width:1px;height:24px;background:#e4e4e4"></div>
 <div class="a" style="left:139px;top:23px;width:1px;height:24px;background:#e4e4e4"></div>
 <div class="t" style="left:7.5px;top:6px;font-size:12px;font-weight:bold;color:#222">Type</div>
 <div class="t" style="left:87.0px;top:6px;font-size:12px;font-weight:bold;color:#222">From</div>
 <div class="t" style="left:147.0px;top:6px;font-size:12px;font-weight:bold;color:#222">To</div>
 <div class="t lbl" style="left:7.5px;top:29px">Thru</div>
 <div class="t lbl" style="left:88.0px;top:29px">1</div>
 <div class="t lbl" style="left:147.0px;top:29px">16</div>
</div>
<!-- preview -->
<div class="a" style="left:1435px;top:322px;width:300px;height:310px;background:#000"></div>
<div class="a" style="left:1455px;top:342px;width:260px;height:6px;background:#006400"></div>
<div class="a" style="left:1455px;top:348px;width:260px;height:4px;background:#f7f7ee"></div>
<div class="a" style="left:1455px;top:352px;width:260px;height:8px;background:#fcbf0c"></div>
<div class="a" style="left:1455px;top:360px;width:260px;height:233px;background:#666"></div>
<div class="a" style="left:1455px;top:593px;width:260px;height:9px;background:#fcbf0c"></div>
<div class="a" style="left:1455px;top:602px;width:260px;height:4px;background:#f7f7ee"></div>
<div class="a" style="left:1455px;top:606px;width:260px;height:6px;background:#006400"></div>
<div class="a" style="left:1470px;top:352px;width:10px;height:250px;background:#e8b224"></div>
<div class="a" style="left:1472px;top:352px;width:6px;height:250px;background:#000"></div>
<div class="t" style="left:1446px;top:351px;font-size:12px;color:#e8e8e8">1</div>
<div class="t" style="left:1439.5px;top:593px;font-size:12px;color:#e8e8e8">16</div>
<!-- via inputs -->
<div class="t lbl" style="left:1222px;top:714px;font-size:13.3px">Minimum Micro Via Drill Diameter:</div>
<div class="a box" style="left:1222px;top:733px;width:202px;height:26px;border-color:#ababab"></div>
<div class="t lbl" style="left:1233px;top:740px;color:#555">393.30709</div>
<div class="t lbl" style="left:1399px;top:740px;color:#9a9a9a">mil</div>
<div class="t lbl" style="left:1222px;top:767px;font-size:13.3px">Minimum Blind Via Ratio:</div>
<div class="a box" style="left:1222px;top:787px;width:202px;height:26px;border-color:#ababab"></div>
<div class="t lbl" style="left:1233px;top:794px;color:#444">0.5</div>
<div class="t" style="left:241px;top:831px;font-size:13.7px;font-weight:bold;color:#1a1a1a">Total Board Thickness: 48.33858 mil</div>
<!-- help + buttons -->
<svg class="a" style="left:228px;top:914px" width="16" height="16" viewBox="0 0 16 16"><circle cx="8" cy="8" r="8" fill="#8a8a8a"/><path d="M5.4 6.2Q5.4 3.5 8 3.5Q10.7 3.5 10.7 6Q10.7 7.4 9.2 8.1Q8 8.7 8 10V10.4" fill="none" stroke="#fff" stroke-width="1.9"/><circle cx="8" cy="12.7" r="1.15" fill="#fff"/></svg>
<div class="a" style="left:1585px;top:907px;width:78px;height:26px;background:#fff;border:1px solid #a6a6a6;border-radius:5px"></div>
<div class="t lbl" style="left:1604px;top:914px">Cancel</div>
<div class="a" style="left:1677px;top:906px;width:80px;height:28px;background:#fff;border:2.5px solid #2b9fd4;border-radius:5px"></div>
<div class="t lbl" style="left:1708px;top:914px">OK</div>
<!-- annotation arrow -->
<svg class="a" style="left:290px;top:85px;overflow:visible" width="80" height="80" viewBox="0 0 80 80"><path d="M17 13.3L55 62" stroke="#1e88e5" stroke-width="5.5" stroke-linecap="round"/><path d="M58.5 70L55.2 53.3L42.6 62.6Z" fill="#1e88e5"/></svg>

</body></html>
